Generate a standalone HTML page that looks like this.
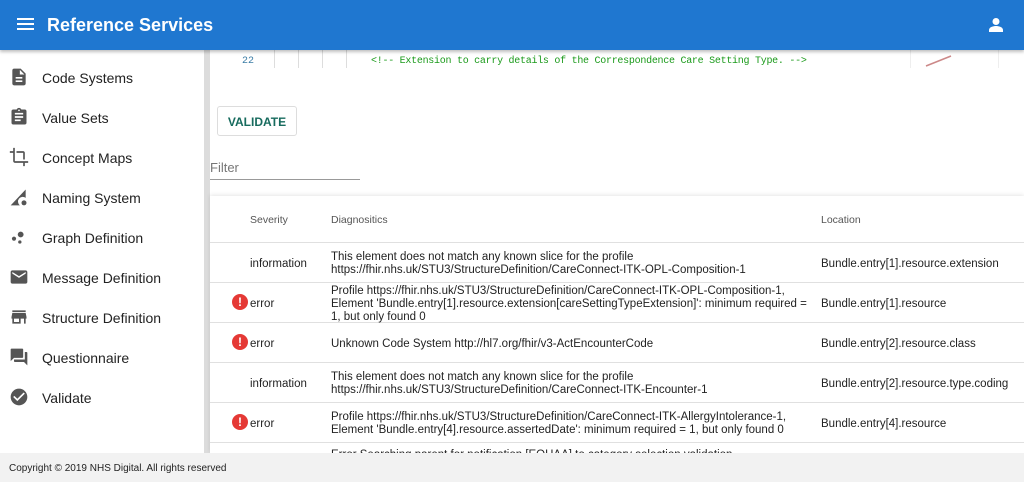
<!DOCTYPE html>
<html><head><style>
*{margin:0;padding:0;box-sizing:border-box}
body{width:1024px;height:482px;overflow:hidden;font-family:"Liberation Sans",sans-serif;background:#fff;position:relative;color:#222}
.hdr{position:absolute;left:0;top:0;width:1024px;height:50px;background:#1f77d0;box-shadow:0 2px 3px rgba(0,0,0,.25);z-index:5}
.hdr .title{position:absolute;left:47px;top:15px;color:#fff;font-size:18px;font-weight:bold}
.side{position:absolute;left:0;top:50px;width:204px;height:403px;background:#fff}
.sb{position:absolute;left:204px;top:50px;width:6px;height:403px;background:#dcdcdc}
.item{position:absolute;left:0;height:40px;width:204px;font-size:14px;color:#222}
.item span{position:absolute;left:42px;top:13px}
.item svg{position:absolute;left:9px;top:10px}
.code{position:absolute;left:210px;top:50px;width:790px;height:20px;font-family:"Liberation Mono",monospace;font-size:10px}
.foot{position:absolute;left:0;top:453px;width:1024px;height:29px;background:#f2f2f2;font-size:10px;padding:10px 9px}
.btn{position:absolute;left:217px;top:106px;width:80px;height:30px;border:1px solid #ddd;border-radius:3px;color:#176b5e;font-weight:bold;font-size:12px;text-align:center;line-height:30px}
.filter{position:absolute;left:210px;top:160px;font-size:13px;color:#777}
.fline{position:absolute;left:210px;top:179px;width:150px;height:1px;background:#999}
.tbl{position:absolute;left:210px;top:196px;width:814px;height:257px;box-shadow:0 -1px 4px rgba(0,0,0,.1);overflow:hidden;background:#fff}
.th{position:absolute;top:0;height:47px;width:814px;border-bottom:1px solid #e0e0e0;font-size:10.5px;color:#555}
.th span{position:absolute;top:18px}
.row{position:absolute;left:0;width:814px;height:40px;border-bottom:1px solid #e0e0e0;font-size:11.5px;color:#222;line-height:13px}
.row .s{position:absolute;left:40px}
.row .d{position:absolute;left:121px}
.row .l{position:absolute;left:611px}
.ei{position:absolute;left:22px;width:16px;height:16px;border-radius:50%;background:#e53935;color:#fff;font-weight:bold;font-size:12px;text-align:center;line-height:16px}
</style></head><body>
<div class="hdr">
<svg style="position:absolute;left:17px;top:17px" width="18" height="14" viewBox="0 0 18 14"><rect y="1" width="17" height="2" fill="#fff"/><rect y="6" width="17" height="2" fill="#fff"/><rect y="11" width="17" height="2" fill="#fff"/></svg>
<div class="title">Reference Services</div>
<svg style="position:absolute;left:988px;top:17px" width="16" height="16" viewBox="0 0 16 16"><circle cx="8" cy="4.5" r="3.5" fill="#fff"/><path d="M1 15v-2c0-3 4.5-4 7-4s7 1 7 4v2z" fill="#fff"/></svg>
</div>
<div class="code"><span style="position:absolute;left:32px;top:6px;color:#3a7ca5">22</span>
<div style="position:absolute;left:64px;top:0;width:1px;height:18px;background:#ddd"></div>
<div style="position:absolute;left:88px;top:0;width:1px;height:18px;background:#ddd"></div>
<div style="position:absolute;left:112px;top:0;width:1px;height:18px;background:#ddd"></div>
<div style="position:absolute;left:136px;top:0;width:1px;height:18px;background:#ddd"></div>
<span style="position:absolute;left:161px;top:6px;color:#1a9a1a;letter-spacing:-0.27px">&lt;!-- Extension to carry details of the Correspondence Care Setting Type. --&gt;</span>
<div style="position:absolute;left:700px;top:0;width:89px;height:18px;border-left:1px solid #eee;border-right:1px solid #eee"><svg width="89" height="18"><path d="M15 16 L40 6" stroke="#c88" stroke-width="1.5"/></svg></div>
</div>
<div class="side">
<div class="item" style="top:7px"><svg width="20" height="20" viewBox="0 0 24 24"><path fill="#555" d="M14 2H6c-1.1 0-2 .9-2 2v16c0 1.1.9 2 2 2h12c1.1 0 2-.9 2-2V8l-6-6zm2 16H8v-2h8v2zm0-4H8v-2h8v2zm-3-5V3.5L18.5 9H13z"/></svg><span>Code Systems</span></div>
<div class="item" style="top:47px"><svg width="20" height="20" viewBox="0 0 24 24"><path fill="#555" d="M19 3h-4.180C14.4 1.84 13.3 1 12 1s-2.4.84-2.82 2H5c-1.1 0-2 .9-2 2v14c0 1.1.9 2 2 2h14c1.1 0 2-.9 2-2V5c0-1.1-.9-2-2-2zm-7 0c.55 0 1 .45 1 1s-.45 1-1 1-1-.45-1-1 .45-1 1-1zm2 14H7v-2h7v2zm3-4H7v-2h10v2zm0-4H7V7h10v2z"/></svg><span>Value Sets</span></div>
<div class="item" style="top:87px"><svg width="20" height="20" viewBox="0 0 24 24"><path fill="#555" d="M17 15h2V7c0-1.1-.9-2-2-2H9v2h8v8zM7 17V1H5v4H1v2h4v10c0 1.1.9 2 2 2h10v4h2v-4h4v-2H7z"/></svg><span>Concept Maps</span></div>
<div class="item" style="top:127px"><svg width="20" height="20" viewBox="0 0 24 24"><path fill="#555" d="M2 22L20 3v10a5 5 0 0 0-7 9z"/><circle cx="18" cy="19" r="3" fill="#555"/></svg><span>Naming System</span></div>
<div class="item" style="top:167px"><svg width="20" height="20" viewBox="0 0 24 24"><circle cx="6" cy="14" r="2.5" fill="#555"/><circle cx="14" cy="9" r="3.5" fill="#555"/><circle cx="13" cy="18" r="2" fill="#555"/></svg><span>Graph Definition</span></div>
<div class="item" style="top:207px"><svg width="20" height="20" viewBox="0 0 24 24"><path fill="#555" d="M20 4H4c-1.1 0-2 .9-2 2v12c0 1.1.9 2 2 2h16c1.1 0 2-.9 2-2V6c0-1.1-.9-2-2-2zm0 4l-8 5-8-5V6l8 5 8-5v2z"/></svg><span>Message Definition</span></div>
<div class="item" style="top:247px"><svg width="20" height="20" viewBox="0 0 24 24"><path fill="#555" d="M20 4H4v2h16V4zm1 10v-2l-1-5H4l-1 5v2h1v6h10v-6h4v6h2v-6h1zm-9 4H6v-4h6v4z"/></svg><span>Structure Definition</span></div>
<div class="item" style="top:287px"><svg width="20" height="20" viewBox="0 0 24 24"><path fill="#555" d="M21 6h-2v9H6v2c0 .55.45 1 1 1h11l4 4V7c0-.55-.45-1-1-1zm-4 6V3c0-.55-.45-1-1-1H3c-.55 0-1 .45-1 1v14l4-4h10c.55 0 1-.45 1-1z"/></svg><span>Questionnaire</span></div>
<div class="item" style="top:327px"><svg width="20" height="20" viewBox="0 0 24 24"><path fill="#555" d="M12 2C6.48 2 2 6.480 2 12s4.48 10 10 10 10-4.48 10-10S17.52 2 12 2zm-2 15l-5-5 1.41-1.41L10 14.17l7.59-7.59L19 8l-9 9z"/></svg><span>Validate</span></div>
</div>
<div class="sb"></div>
<div class="btn">VALIDATE</div>
<div class="filter">Filter</div>
<div class="fline"></div>
<div class="tbl">
<div class="th"><span style="left:40px">Severity</span><span style="left:121px">Diagnositics</span><span style="left:611px">Location</span></div>
<div class="row" style="top:47px"><span class="s" style="top:15px">information</span><span class="d" style="top:8px">This element does not match any known slice for the profile<br>https://fhir.nhs.uk/STU3/StructureDefinition/CareConnect-ITK-OPL-Composition-1</span><span class="l" style="top:15px">Bundle.entry[1].resource.extension</span></div>
<div class="row" style="top:87px"><div class="ei" style="top:11px">!</div><span class="s" style="top:15px">error</span><span class="d" style="top:2px">Profile https://fhir.nhs.uk/STU3/StructureDefinition/CareConnect-ITK-OPL-Composition-1,<br>Element 'Bundle.entry[1].resource.extension[careSettingTypeExtension]': minimum required =<br>1, but only found 0</span><span class="l" style="top:15px">Bundle.entry[1].resource</span></div>
<div class="row" style="top:127px"><div class="ei" style="top:11px">!</div><span class="s" style="top:15px">error</span><span class="d" style="top:15px">Unknown Code System http://hl7.org/fhir/v3-ActEncounterCode</span><span class="l" style="top:15px">Bundle.entry[2].resource.class</span></div>
<div class="row" style="top:167px"><span class="s" style="top:15px">information</span><span class="d" style="top:8px">This element does not match any known slice for the profile<br>https://fhir.nhs.uk/STU3/StructureDefinition/CareConnect-ITK-Encounter-1</span><span class="l" style="top:15px">Bundle.entry[2].resource.type.coding</span></div>
<div class="row" style="top:207px"><div class="ei" style="top:11px">!</div><span class="s" style="top:15px">error</span><span class="d" style="top:8px">Profile https://fhir.nhs.uk/STU3/StructureDefinition/CareConnect-ITK-AllergyIntolerance-1,<br>Element 'Bundle.entry[4].resource.assertedDate': minimum required = 1, but only found 0</span><span class="l" style="top:15px">Bundle.entry[4].resource</span></div>
<div class="row" style="top:247px"><span class="d" style="top:6px">Error Searching parent for notification [EOHAA] to category selection validation</span></div>
</div>
<div class="foot">Copyright © 2019 NHS Digital. All rights reserved</div>
</body></html>
